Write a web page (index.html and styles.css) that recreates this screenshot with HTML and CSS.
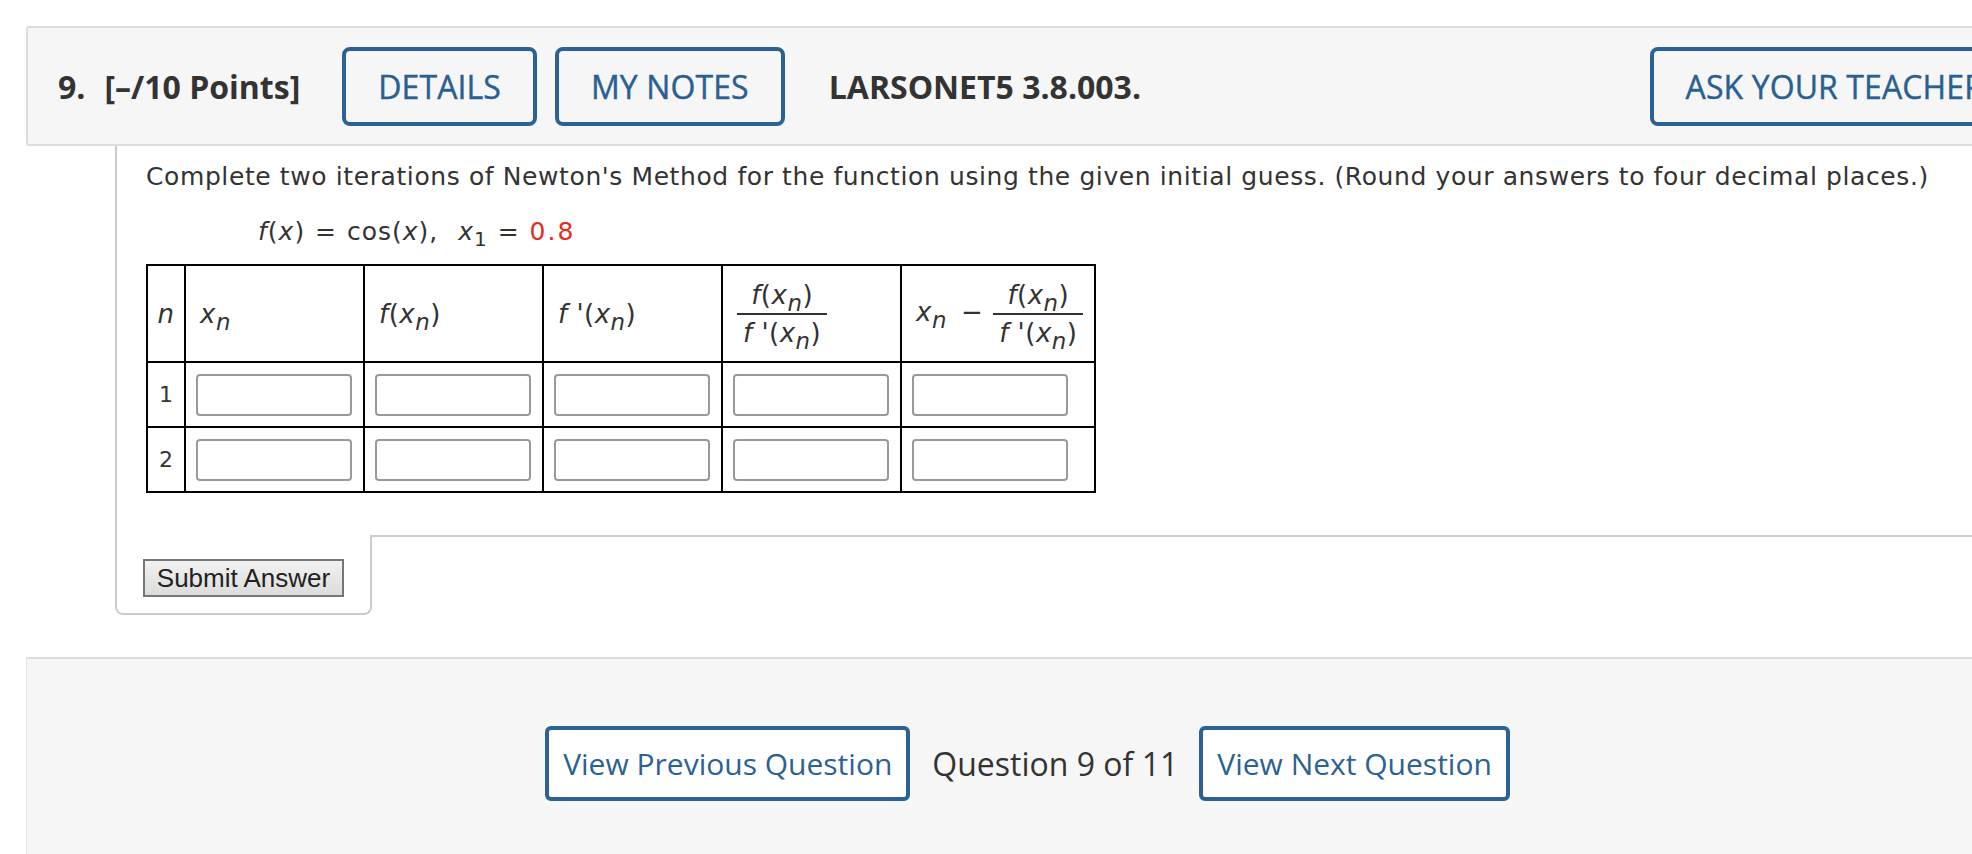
FILE: index.html
```html
<!DOCTYPE html>
<html>
<head>
<meta charset="utf-8">
<title>Question 9</title>
<link rel="stylesheet" href="styles.css">
</head>
<body>
<div class="page">
  <div class="qhead">
    <span class="qnum">9.</span>
    <span class="qpts">[–/10 Points]</span>
    <button class="hbtn">DETAILS</button>
    <button class="hbtn">MY NOTES</button>
    <span class="qref">LARSONET5 3.8.003.</span>
    <button class="hbtn ask">ASK YOUR TEACHER</button>
  </div>

  <div class="qbody">
    <div class="qcontent">
      <p class="prompt">Complete two iterations of Newton's Method for the function using the given initial guess. (Round your answers to four decimal places.)</p>
      <div class="formula"><i>f</i>(<i>x</i>) = cos(<i>x</i>),&nbsp; <i>x</i><sub class="num">1</sub> = <span class="red">0.8</span></div>
      <table class="newton">
        <tr class="hrow">
          <th class="ncol"><i>n</i></th>
          <th><i>x</i><sub><i>n</i></sub></th>
          <th><i>f</i>(<i>x</i><sub><i>n</i></sub>)</th>
          <th><i>f</i> '(<i>x</i><sub><i>n</i></sub>)</th>
          <th>
            <span class="frac">
              <span class="top"><i>f</i>(<i>x</i><sub><i>n</i></sub>)</span>
              <span class="bot"><i>f</i> '(<i>x</i><sub><i>n</i></sub>)</span>
            </span>
          </th>
          <th class="last"><span class="xn"><i>x</i><sub><i>n</i></sub></span><span class="minus">−</span><span class="frac">
              <span class="top"><i>f</i>(<i>x</i><sub><i>n</i></sub>)</span>
              <span class="bot"><i>f</i> '(<i>x</i><sub><i>n</i></sub>)</span>
            </span></th>
        </tr>
        <tr>
          <td class="ncol">1</td>
          <td><input type="text" class="ans"></td>
          <td><input type="text" class="ans"></td>
          <td><input type="text" class="ans"></td>
          <td><input type="text" class="ans"></td>
          <td class="last"><input type="text" class="ans"></td>
        </tr>
        <tr>
          <td class="ncol">2</td>
          <td><input type="text" class="ans"></td>
          <td><input type="text" class="ans"></td>
          <td><input type="text" class="ans"></td>
          <td><input type="text" class="ans"></td>
          <td class="last"><input type="text" class="ans"></td>
        </tr>
      </table>
    </div>
    <div class="qsubmit">
      <button class="submit">Submit Answer</button>
    </div>
  </div>

  <div class="qnav">
    <button class="nbtn">View Previous Question</button>
    <span class="qcount">Question 9 of 11</span>
    <button class="nbtn">View Next Question</button>
  </div>
</div>
</body>
</html>
```

FILE: styles.css
```css
html, body {
  margin: 0;
  padding: 0;
  background: #ffffff;
  overflow: hidden;
}

.page {
  width: 2002px;
  margin-left: 26px;
  padding-top: 26px;
}

/* ---------- header bar ---------- */
.qhead {
  display: flex;
  align-items: center;
  height: 120px;
  box-sizing: border-box;
  background: #f6f6f6;
  border: 2px solid #dddddd;
  border-radius: 3px;
  padding: 0 6px 0 30px;
  font-family: "Open Sans", sans-serif;
  color: #333333;
}

.qnum {
  font-size: 32px;
  font-weight: 700;
  margin-right: 19px;
}

.qpts {
  font-size: 32px;
  font-weight: 700;
  margin-right: 42px;
}

.qref {
  font-size: 32px;
  font-weight: 700;
  margin-left: 44px;
}

.hbtn {
  height: 79px;
  box-sizing: border-box;
  border: 4px solid #2c6194;
  border-radius: 8px;
  background: #f6f6f6;
  padding: 0 32px;
  font-family: "Open Sans", sans-serif;
  font-size: 32px;
  letter-spacing: 0.1px;
  color: #2a5f92;
  white-space: nowrap;
  -webkit-text-stroke: 0.4px #2a5f92;
}

.hbtn + .hbtn {
  margin-left: 18px;
}

.hbtn.ask {
  margin-left: auto;
}

/* ---------- question body ---------- */
.qbody {
  margin-left: 89px;
  font-family: "DejaVu Sans", Verdana, sans-serif;
  color: #333333;
}

.qcontent {
  border-left: 2px solid #cccccc;
  border-bottom: 2px solid #cccccc;
  padding: 16px 0 42px 29px;
}

.prompt {
  margin: 0;
  font-size: 25px;
  letter-spacing: 0.6px;
  line-height: 30px;
}

.formula {
  margin: 24px 0 16px 112px;
  font-size: 25px;
  letter-spacing: 1px;
  line-height: 32px;
  word-spacing: 1px;
}

.formula sub.num {
  font-size: 80%;
  vertical-align: -0.28em;
  line-height: 0;
}

.red {
  color: #e52b1e;
  letter-spacing: 2px;
}

/* ---------- table ---------- */
.newton {
  border-collapse: separate;
  border-spacing: 0;
  border-top: 2px solid #000000;
  border-left: 2px solid #000000;
  font-size: 22px;
  color: #333333;
}

.newton th,
.newton td {
  border-right: 2px solid #000000;
  border-bottom: 2px solid #000000;
  text-align: left;
  font-weight: normal;
  vertical-align: middle;
  box-sizing: border-box;
  padding: 0 0 0 10px;
  width: 179px;
}

.newton th {
  height: 97px;
  padding-left: 14px;
  font-size: 26px;
  letter-spacing: 0.5px;
}

.newton td {
  height: 65px;
}

.newton .ncol {
  width: 38px;
  padding: 0;
  text-align: center;
}

.newton .last {
  width: 194px;
}

.newton sub {
  font-size: 88%;
  vertical-align: -0.3em;
  line-height: 0;
}

.newton th .frac {
  display: inline-flex;
  flex-direction: column;
  align-items: stretch;
  text-align: center;
  vertical-align: middle;
  line-height: 34px;
}

.newton th .frac .top {
  border-bottom: 2px solid #333333;
  padding-bottom: 1px;
}

.newton th .frac .bot {
  padding: 1px 6px 0;
}

.newton th .minus {
  margin: 0 10px 0 14px;
}

.ans {
  display: block;
  width: 156px;
  height: 42px;
  box-sizing: border-box;
  border: 2px solid #999999;
  border-radius: 4px;
  background: #ffffff;
  margin: 0;
  padding: 0 4px;
}

/* ---------- submit ---------- */
.qsubmit {
  width: 257px;
  height: 80px;
  box-sizing: border-box;
  margin-top: -2px;
  background: #ffffff;
  border-left: 2px solid #cccccc;
  border-right: 2px solid #cccccc;
  border-bottom: 2px solid #cccccc;
  border-radius: 0 0 8px 8px;
  padding: 24px 0 0 26px;
}

.submit {
  display: block;
  width: 201px;
  height: 38px;
  box-sizing: border-box;
  border: 2px solid #777777;
  border-radius: 0;
  background: linear-gradient(#f2f2f2, #dcdcdc);
  font-family: "Liberation Sans", Arial, sans-serif;
  font-size: 26px;
  color: #222222;
  padding: 0;
}

/* ---------- navigation ---------- */
.qnav {
  margin-top: 42px;
  height: 220px;
  box-sizing: border-box;
  background: #f6f6f6;
  border-top: 2px solid #dddddd;
  border-left: 1px solid #e6e6e6;
  display: flex;
  justify-content: center;
  align-items: center;
  padding-top: 67px;
  padding-bottom: 76px;
  font-family: "Open Sans", sans-serif;
}

.nbtn {
  height: 75px;
  box-sizing: border-box;
  border: 4px solid #2c6194;
  border-radius: 6px;
  background: #ffffff;
  padding: 0 14px;
  font-family: "Open Sans", sans-serif;
  font-size: 30px;
  color: #2c6194;
  white-space: nowrap;
}

.qcount {
  margin: 0 21px 0 22px;
  font-size: 32px;
  color: #333333;
}
```
